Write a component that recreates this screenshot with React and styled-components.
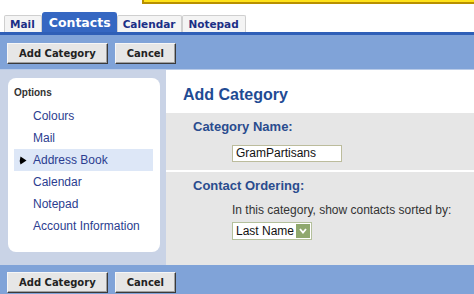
import React from 'react';
import styled, { createGlobalStyle } from 'styled-components';

const GlobalStyle = createGlobalStyle`
  html, body {
    margin: 0;
    padding: 0;
    background: #ffffff;
    font-family: "Liberation Sans", Arial, sans-serif;
  }
`;

const Page = styled.div`
  width: 474px;
  height: 294px;
  overflow: hidden;
  display: flex;
  flex-direction: column;
  background: #ffffff;
`;

const TopStrip = styled.div`
  height: 12px;
  display: flex;
`;

const Notice = styled.div`
  margin-left: 142px;
  flex: 1;
  height: 2px;
  background: #ffe21a;
  border-bottom: 2px solid #b89000;
  border-left: 2px solid #b89000;
`;

const TabBar = styled.div`
  height: 20px;
  display: flex;
  align-items: flex-end;
  padding-left: 4px;
`;

const Tab = styled.div`
  box-sizing: border-box;
  height: ${({ $active }) => ($active ? '20px' : '17px')};
  padding: ${({ $active }) => ($active ? '0 5px 0 6px' : '0 6px 0 5px')};
  display: flex;
  align-items: center;
  font-family: "DejaVu Sans", Verdana, sans-serif;
  font-weight: bold;
  font-size: ${({ $active }) => ($active ? '12.5px' : '10.5px')};
  color: ${({ $active }) => ($active ? '#ffffff' : '#1c2f86')};
  background: ${({ $active }) => ($active ? '#3567c2' : '#f4f4f4')};
  border: 1px solid ${({ $active }) => ($active ? '#3567c2' : '#cfcfcf')};
  border-bottom: none;
  border-radius: ${({ $active }) => ($active ? '3px 3px 0 0' : '2px 2px 0 0')};
`;

const Toolbar = styled.div`
  box-sizing: border-box;
  height: ${({ $bottom }) => ($bottom ? '29px' : '38px')};
  display: flex;
  align-items: flex-start;
  gap: 7px;
  padding: ${({ $bottom }) => ($bottom ? '7px 7px 0' : '8px 7px 0')};
  background: #80a3d8;
  border-top: ${({ $bottom }) => ($bottom ? 'none' : '3px solid #2f5fb7')};
  border-bottom: ${({ $bottom }) => ($bottom ? 'none' : '1px solid #b9cbe8')};
`;

const Button = styled.button`
  box-sizing: border-box;
  height: 21px;
  margin: 0;
  padding: 0 11px;
  font-family: "DejaVu Sans", Verdana, sans-serif;
  font-weight: bold;
  font-size: 10px;
  color: #222222;
  background: #e6e6e6;
  border: 1px solid;
  border-color: #f6f6f6 #3a3a3a #3a3a3a #f6f6f6;
  box-shadow: inset -1px -1px 0 #a0a0a0;
  cursor: pointer;
`;

const Main = styled.div`
  height: 195px;
  display: flex;
`;

const Sidebar = styled.div`
  width: 166px;
  box-sizing: border-box;
  padding: 8px 6px 0 8px;
  background: #c9d3e6;
`;

const Panel = styled.div`
  height: 174px;
  box-sizing: border-box;
  padding: 8px 7px 0 6px;
  background: #ffffff;
  border-radius: 8px;
`;

const PanelTitle = styled.div`
  height: 14px;
  line-height: 14px;
  font-size: 10px;
  font-weight: bold;
  color: #333333;
  margin-bottom: 5px;
`;

const MenuItem = styled.div`
  position: relative;
  height: 22px;
  line-height: 22px;
  padding-left: 19px;
  font-size: 12px;
  color: #2b3d90;
  background: ${({ $current }) => ($current ? '#dde7f7' : 'transparent')};
  cursor: pointer;
`;

const Bullet = styled.svg`
  position: absolute;
  left: 5px;
  top: 7px;
`;

const Content = styled.div`
  flex: 1;
  display: flex;
  flex-direction: column;
  gap: 2px;
`;

const Heading = styled.h2`
  margin: 0;
  height: 41px;
  box-sizing: border-box;
  padding: 16px 0 0 17px;
  line-height: 18px;
  font-size: 16px;
  font-weight: bold;
  color: #1f4b94;
`;

const Section = styled.div`
  background: #e6e6e6;
  box-sizing: border-box;
  height: ${({ $h }) => $h}px;
  padding: 7px 0 0 27px;
`;

const Label = styled.div`
  height: 14px;
  line-height: 14px;
  font-size: 13px;
  font-weight: bold;
  color: #2a4c8e;
`;

const Field = styled.div`
  padding-left: 39px;
  margin-top: ${({ $gap }) => $gap}px;
`;

const Hint = styled.div`
  font-size: 12px;
  line-height: 14px;
  color: #333333;
`;

const TextInput = styled.input`
  box-sizing: border-box;
  width: 110px;
  height: 17px;
  padding: 0 3px;
  font-family: "Liberation Sans", Arial, sans-serif;
  font-size: 12px;
  color: #111111;
  background: #ffffff;
  border: 1px solid #bcbc9c;
  outline: none;
`;

const Select = styled.div`
  box-sizing: border-box;
  width: 80px;
  height: 18px;
  display: flex;
  align-items: center;
  justify-content: space-between;
  padding: 0 1px 0 3px;
  background: #ffffff;
  border: 1px solid #b4c09c;
  font-size: 12px;
  color: #111111;
`;

const SelectArrow = styled.span`
  width: 14px;
  height: 14px;
  display: flex;
  align-items: center;
  justify-content: center;
  background: #8fa86e;
`;

const menu = ['Colours', 'Mail', 'Address Book', 'Calendar', 'Notepad', 'Account Information'];

const App = () => {
  return (
    <Page>
      <GlobalStyle />
      <TopStrip>
        <Notice />
      </TopStrip>
      <TabBar>
        <Tab>Mail</Tab>
        <Tab $active>Contacts</Tab>
        <Tab>Calendar</Tab>
        <Tab>Notepad</Tab>
      </TabBar>
      <Toolbar>
        <Button>Add Category</Button>
        <Button>Cancel</Button>
      </Toolbar>
      <Main>
        <Sidebar>
          <Panel>
            <PanelTitle>Options</PanelTitle>
            {menu.map((item) => (
              <MenuItem key={item} $current={item === 'Address Book'}>
                {item === 'Address Book' && (
                  <Bullet width="8" height="9" viewBox="0 0 8 9">
                    <path d="M1.5 0.5 L7.5 4.5 L1.5 8.5 Q0 4.5 1.5 0.5 Z" fill="#000" />
                  </Bullet>
                )}
                {item}
              </MenuItem>
            ))}
          </Panel>
        </Sidebar>
        <Content>
          <Heading>Add Category</Heading>
          <Section $h={57}>
            <Label>Category Name:</Label>
            <Field $gap={9}>
              <TextInput defaultValue="GramPartisans" />
            </Field>
          </Section>
          <Section $h={93}>
            <Label>Contact Ordering:</Label>
            <Field $gap={10}>
              <Hint>In this category, show contacts sorted by:</Hint>
            </Field>
            <Field $gap={5}>
              <Select>
                Last Name
                <SelectArrow>
                  <svg width="8" height="6" viewBox="0 0 8 6">
                    <path d="M1 1 L4 4.5 L7 1" stroke="#fff" strokeWidth="1.8" fill="none" />
                  </svg>
                </SelectArrow>
              </Select>
            </Field>
          </Section>
        </Content>
      </Main>
      <Toolbar $bottom>
        <Button>Add Category</Button>
        <Button>Cancel</Button>
      </Toolbar>
    </Page>
  );
};

export default App;
